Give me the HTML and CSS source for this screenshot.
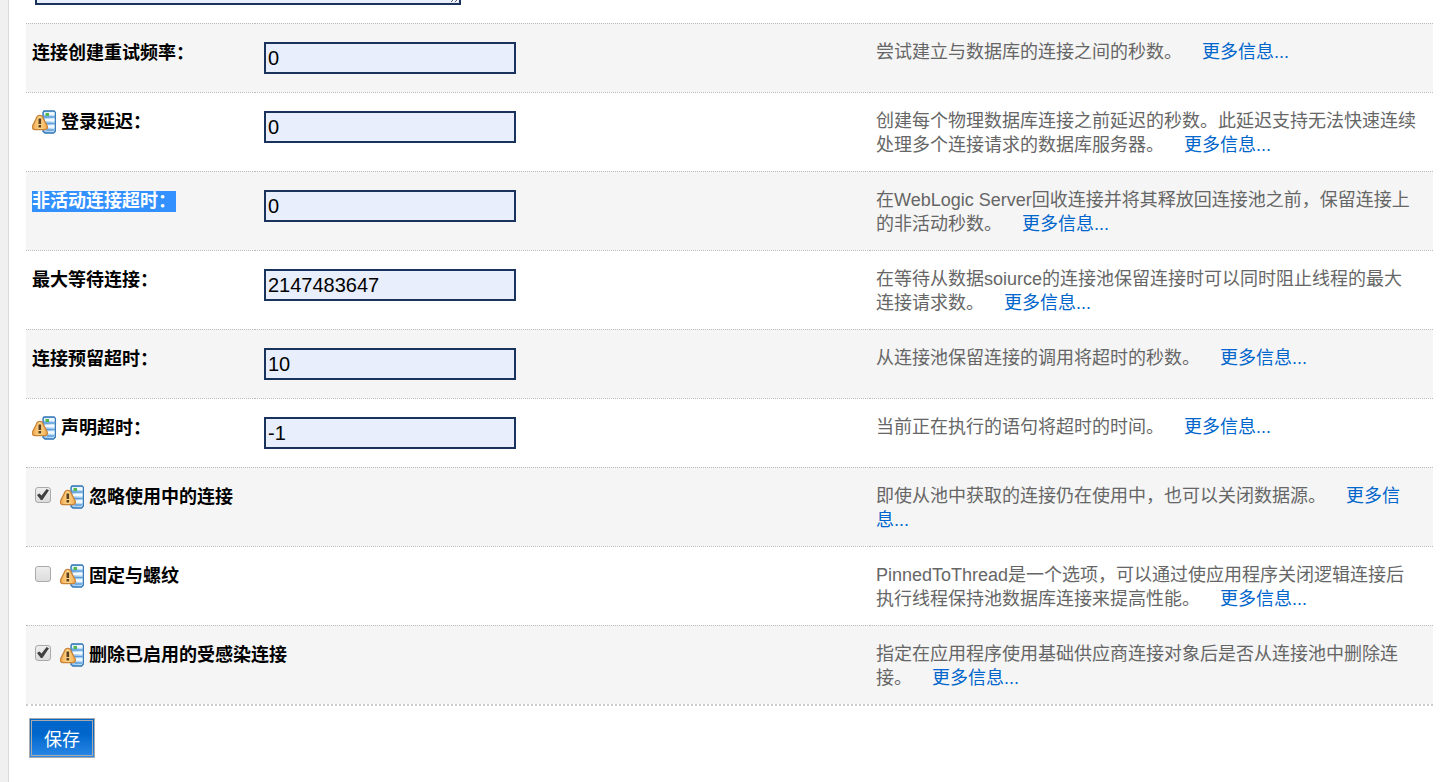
FILE: index.html
```
<!DOCTYPE html>
<html lang="zh-CN">
  <head>
    <meta charset="UTF-8" />
    <meta name="viewport" content="width=device-width, initial-scale=1.0" />
    <title>连接池配置</title>
    <link rel="stylesheet" href="styles.css">
  </head>
  <body>
    <svg class="sprite" aria-hidden="true">
      <defs>
        <linearGradient id="blue" x1="0" x2="1">
          <stop offset="0" stop-color="#8fc0ee" />
          <stop offset="1" stop-color="#d4eafb" />
        </linearGradient>
        <linearGradient id="amber" x1="0" x2="1">
          <stop offset="0" stop-color="#f0a650" />
          <stop offset="0.5" stop-color="#ffd98a" />
          <stop offset="1" stop-color="#efa850" />
        </linearGradient>
      </defs>
      <!-- server with a warning sign: change needs a restart -->
      <symbol id="restart" viewBox="0 0 24 24">
        <path d="M12 1h10l1.300 1.300v19L21.500 23h-8.500l-2-1.500V2.500z" fill="url(#blue)" stroke="#2f75b5" stroke-width="1.300" />
        <path d="M12 3.500h10.500M13 10h9.500M15 16.500h7.500" stroke="#f3faff" stroke-width="2.600" />
        <path d="M12 7h10.500M14 13.500h8.500M15 20h7" stroke="#5b9ddb" stroke-width="1.600" />
        <rect x="13.500" y="3" width="3.500" height="3" fill="#54b74c" />
        <path d="M7.800 5.300C10 5.300 11 7 11.500 9l3 5.500c1.800 3 .6 5.200-2 5.200H3.200C.6 19.700-.4 17.500 1.200 14.500L4 9c.6-2 1.600-3.700 3.800-3.700z" fill="url(#amber)" stroke="#c98438" stroke-width="1.300" />
        <path d="M7.800 8.500v5.500M7.800 15v2.400" stroke="#5a4020" stroke-width="2.600" />
      </symbol>
    </svg>
    <main class="panel">
      <form>
        <textarea class="field init-sql" aria-label="初始化 SQL"></textarea>
        <table class="settings">
          <colgroup>
            <col class="col-label" />
            <col />
            <col class="col-help" />
          </colgroup>
          <tr>
            <th><label for="retry">连接创建重试频率：</label></th>
            <td><input type="text" class="field" id="retry" value="0" /></td>
            <td class="help">尝试建立与数据库的连接之间的秒数。<a href="#">更多信息...</a></td>
          </tr>
          <tr>
            <th><svg class="icon"><use href="#restart" /></svg><label for="login">登录延迟：</label></th>
            <td><input type="text" class="field" id="login" value="0" /></td>
            <td class="help">创建每个物理数据库连接之前延迟的秒数。此延迟支持无法快速连续处理多个连接请求的数据库服务器。<a href="#">更多信息...</a></td>
          </tr>
          <tr>
            <th><label for="inactive"><span class="selected">非活动连接超时：</span></label></th>
            <td><input type="text" class="field" id="inactive" value="0" /></td>
            <td class="help">在WebLogic Server回收连接并将其释放回连接池之前，保留连接上的非活动秒数。<a href="#">更多信息...</a></td>
          </tr>
          <tr>
            <th><label for="waiters">最大等待连接：</label></th>
            <td><input type="text" class="field" id="waiters" value="2147483647" /></td>
            <td class="help">在等待从数据soiurce的连接池保留连接时可以同时阻止线程的最大连接请求数。<a href="#">更多信息...</a></td>
          </tr>
          <tr>
            <th><label for="reserve">连接预留超时：</label></th>
            <td><input type="text" class="field" id="reserve" value="10" /></td>
            <td class="help">从连接池保留连接的调用将超时的秒数。<a href="#">更多信息...</a></td>
          </tr>
          <tr>
            <th><svg class="icon"><use href="#restart" /></svg><label for="statement">声明超时：</label></th>
            <td><input type="text" class="field" id="statement" value="-1" /></td>
            <td class="help">当前正在执行的语句将超时的时间。<a href="#">更多信息...</a></td>
          </tr>
          <tr>
            <th colspan="2"><input type="checkbox" class="check" id="ignore" checked /><svg class="icon"><use href="#restart" /></svg><label for="ignore">忽略使用中的连接</label></th>
            <td class="help">即使从池中获取的连接仍在使用中，也可以关闭数据源。<a href="#">更多信息...</a></td>
          </tr>
          <tr>
            <th colspan="2"><input type="checkbox" class="check" id="pinned" /><svg class="icon"><use href="#restart" /></svg><label for="pinned">固定与螺纹</label></th>
            <td class="help">PinnedToThread是一个选项，可以通过使应用程序关闭逻辑连接后执行线程保持池数据库连接来提高性能。<a href="#">更多信息...</a></td>
          </tr>
          <tr>
            <th colspan="2"><input type="checkbox" class="check" id="infected" checked /><svg class="icon"><use href="#restart" /></svg><label for="infected">删除已启用的受感染连接</label></th>
            <td class="help">指定在应用程序使用基础供应商连接对象后是否从连接池中删除连接。<a href="#">更多信息...</a></td>
          </tr>
        </table>
        <button type="submit" class="save">保存</button>
      </form>
    </main>
  </body>
</html>
```
FILE: styles.css
```
* {
  box-sizing: border-box;
}

body {
  margin: 0;
  padding-left: 8px;
  background-color: #f0f0f0;
  font-family: "Liberation Sans", "Noto Sans CJK SC", sans-serif;
  font-size: 18px;
  line-height: 24px;
  color: #000;
}

.sprite {
  position: absolute;
  width: 0;
  height: 0;
}

/* LAYOUT */
.panel {
  min-height: 100vh;
  padding: 0 7px 0 17px;
  border-left: 1px solid #d9d9d9;
  background-color: #fff;
}

.settings {
  width: 100%;
  table-layout: fixed;
  border-spacing: 0;
  border-bottom: 2px dotted #ccc;
}

.col-label {
  width: 229px;
}

.col-help {
  width: 563px;
}

.settings tr:nth-child(odd) {
  background-color: #f5f5f5;
}

.settings th,
.settings td {
  border-top: 1px dotted #bbb;
  vertical-align: top;
  text-align: left;
}

.settings th {
  padding: 17px 6px 13px;
}

.settings td {
  padding: 18px 9px;
}

.settings .help {
  padding: 16px 16px 14px 6px;
  color: #666;
}

.help a {
  margin-left: 20px;
  color: #0066cc;
  text-decoration: none;
}

.selected {
  display: inline-block;
  line-height: 21px;
  background-color: #3390ff;
  color: #fff;
}

.icon {
  width: 24px;
  height: 24px;
  margin-right: 5px;
  vertical-align: top;
}

/* CONTROLS */
.field {
  display: block;
  width: 252px;
  height: 32px;
  padding: 0 2px;
  border: 2px solid #1a335d;
  border-radius: 0;
  background-color: #e8eefc;
  color: #000;
  font-family: inherit;
  font-size: 20px;
}

.init-sql {
  width: 426px;
  height: 5px;
  margin: 0 0 18px 9px;
  border-top: 0;
}

.check {
  appearance: none;
  width: 16px;
  height: 16px;
  margin: 2px 9px 0 3px;
  border: 1px solid #aaa;
  border-radius: 3px;
  background: linear-gradient(#eee, #dcdcdc);
  vertical-align: top;
}

.check:checked::after {
  content: "";
  display: block;
  width: 12px;
  height: 11px;
  margin: 1px;
  background-color: #404040;
  clip-path: polygon(0 55%, 20% 40%, 38% 60%, 80% 0, 100% 12%, 45% 100%, 32% 100%);
}

.save {
  display: block;
  width: 66px;
  height: 40px;
  margin: 12px 0 0 3px;
  padding: 0;
  border: 1px solid #aaa;
  outline: 1px solid #aaa;
  outline-offset: -3px;
  background: linear-gradient(#0066cc 40%, #2b88e6);
  color: #fff;
  font-family: inherit;
  font-size: 18px;
  cursor: pointer;
}
```
